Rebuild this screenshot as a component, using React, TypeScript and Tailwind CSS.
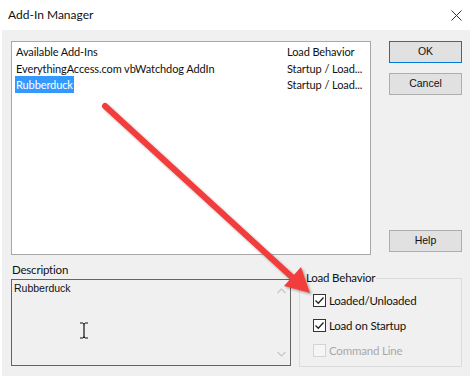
import React from 'react';

const ui = { fontFamily: 'Lato, "Noto Sans", Arial, sans-serif' };
const classic = { fontFamily: '"Liberation Sans", Arial, sans-serif' };

function Check({ checked, disabled, label }: { checked?: boolean; disabled?: boolean; label: string }) {
  return (
    <div className="flex items-center h-[13px]">
      <div
        className={`w-[13px] h-[13px] border flex items-center justify-center ${
          disabled ? 'border-[#d4d4d4] bg-[#f5f5f5]' : 'border-[#333333] bg-white'
        }`}
      >
        {checked && (
          <svg width="11" height="11" viewBox="0 0 11 11">
            <path d="M1.5 5.5 L4.3 8.3 L9.5 2.5" fill="none" stroke="#222" strokeWidth="1.3" />
          </svg>
        )}
      </div>
      <span className={`ml-[3px] text-[11.5px] tracking-[-0.2px] leading-none whitespace-nowrap ${disabled ? 'text-[#a8a8a8]' : 'text-[#111]'}`}>
        {label}
      </span>
    </div>
  );
}

function Btn({ label, primary }: { label: string; primary?: boolean }) {
  return (
    <div
      className={`w-[73px] h-[22px] flex items-center justify-center bg-[#e1e1e1] border text-[10.5px] text-[#111] ${
        primary ? 'border-[#0078d7]' : 'border-[#adadad]'
      }`}
      style={classic}
    >
      {label}
    </div>
  );
}

export default function App() {
  const rows = [
    { name: 'Available Add-Ins', load: 'Load Behavior' },
    { name: 'EverythingAccess.com vbWatchdog AddIn', load: 'Startup / Load...' },
    { name: 'Rubberduck', load: 'Startup / Load...', selected: true },
  ];

  return (
    <div className="relative w-[474px] h-[380px] bg-white overflow-hidden" style={ui}>
      {/* title bar */}
      <div className="h-[30px] flex items-center justify-between pl-[8px] pr-[12px]">
        <span className="text-[12px] text-[#111]">Add-In Manager</span>
        <svg width="11" height="11" viewBox="0 0 11 11">
          <path d="M0.5 0.5 L10.5 10.5 M10.5 0.5 L0.5 10.5" stroke="#333" strokeWidth="1" />
        </svg>
      </div>

      {/* dialog body */}
      <div className="ml-[2px] w-[468px] h-[346px] bg-[#f0f0f0] pt-[11px] pl-[9px]">
        <div className="flex">
          {/* list */}
          <div className="w-[360px] h-[214px] bg-white border border-[#a8a8a8] pt-[2px] pl-[3px]">
            {rows.map((r) => (
              <div key={r.name} className="flex h-[16.5px] items-center text-[11px] tracking-[-0.1px] text-[#111] whitespace-nowrap">
                <div className="w-[272px]">
                  <span className={`px-[1px] py-[2px] ${r.selected ? 'bg-[#3399ff] text-white' : ''}`}>{r.name}</span>
                </div>
                <span>{r.load}</span>
              </div>
            ))}
          </div>

          {/* buttons */}
          <div className="ml-[18px] flex flex-col">
            <Btn label="OK" primary />
            <div className="mt-[10px]">
              <Btn label="Cancel" />
            </div>
            <div className="mt-[135px]">
              <Btn label="Help" />
            </div>
          </div>
        </div>

        <div className="flex items-start mt-[7px]">
          {/* description */}
          <div className="flex flex-col">
            <span className="text-[11.5px] tracking-[-0.2px] text-[#111] leading-none h-[17px] pl-[1px] pt-[2px]">Description</span>
            <div className="w-[280px] h-[87px] border border-[#646464] flex" style={classic}>
              <div className="flex-1 pl-[2px] pt-[1px] text-[10.5px] text-[#111] leading-[14px]">Rubberduck</div>
              <div className="w-[17px] flex flex-col items-center justify-between py-[8px]">
                <svg width="9" height="6" viewBox="0 0 9 6">
                  <path d="M0.5 5 L4.5 1 L8.5 5" fill="none" stroke="#c6c6c6" strokeWidth="1.2" />
                </svg>
                <svg width="9" height="6" viewBox="0 0 9 6">
                  <path d="M0.5 1 L4.5 5 L8.5 1" fill="none" stroke="#c6c6c6" strokeWidth="1.2" />
                </svg>
              </div>
            </div>
          </div>

          {/* load behavior group */}
          <div className="ml-[8px] mt-[16px] w-[163px] h-[89px] border border-[#dcdcdc] relative pl-[13px] pt-[15px] flex flex-col gap-[12px]">
            <span className="absolute -top-[7px] left-[5px] bg-[#f0f0f0] px-[1px] text-[11.5px] tracking-[-0.2px] leading-none text-[#111]">
              Load Behavior
            </span>
            <Check checked label="Loaded/Unloaded" />
            <Check checked label="Load on Startup" />
            <Check disabled label="Command Line" />
          </div>
        </div>
      </div>

      {/* I-beam cursor */}
      <svg className="absolute left-[79px] top-[322px]" width="10" height="17" viewBox="0 0 10 17">
        <path d="M1 1 H4 M6 1 H9 M4 1.5 Q5 1.5 5 3 V14 Q5 15.5 4 15.5 M6 1.5 Q5 1.5 5 3 M5 14 Q5 15.5 6 15.5 M1 16 H4 M6 16 H9" fill="none" stroke="#111" strokeWidth="1.2" />
      </svg>

      {/* annotation arrow */}
      <svg className="absolute inset-0 pointer-events-none" width="474" height="380" viewBox="0 0 474 380">
        <defs>
          <filter id="sh" x="-10%" y="-10%" width="130%" height="130%">
            <feDropShadow dx="1.5" dy="1.5" stdDeviation="1.2" floodColor="#000" floodOpacity="0.35" />
          </filter>
        </defs>
        <g filter="url(#sh)">
          <line x1="105" y1="106" x2="294" y2="279" stroke="#f23c3c" strokeWidth="6" strokeLinecap="round" />
          <polygon points="310,293 284,286 301,267" fill="#f23c3c" />
        </g>
      </svg>
    </div>
  );
}
